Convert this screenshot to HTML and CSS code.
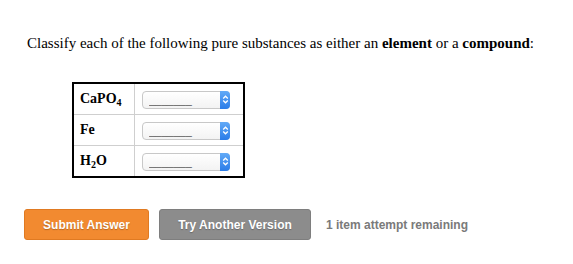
FILE: index.html
```html
<!DOCTYPE html>
<html lang="en">
<head>
    <meta charset="UTF-8">
    <title>Classify substances</title>
    <link rel="stylesheet" href="styles.css">
</head>
<body>
    <div class="question">
        <p class="prompt">Classify each of the following pure substances as either an <b>element</b> or a <b>compound</b>:</p>

        <table class="answers">
            <tr>
                <th>CaPO<sub>4</sub></th>
                <td>
                    <span class="picker">
                        <select><option>_______</option><option>element</option><option>compound</option></select>
                        <span class="arrow"><svg width="7" height="11" viewBox="0 0 7 11"><path d="M1.2 4.5 L3.5 2.2 L5.8 4.5 M1.2 6.5 L3.5 8.8 L5.8 6.5" fill="none" stroke="#fff" stroke-width="1.3"/></svg></span>
                    </span>
                </td>
            </tr>
            <tr>
                <th>Fe</th>
                <td>
                    <span class="picker">
                        <select><option>_______</option><option>element</option><option>compound</option></select>
                        <span class="arrow"><svg width="7" height="11" viewBox="0 0 7 11"><path d="M1.2 4.5 L3.5 2.2 L5.8 4.5 M1.2 6.5 L3.5 8.8 L5.8 6.5" fill="none" stroke="#fff" stroke-width="1.3"/></svg></span>
                    </span>
                </td>
            </tr>
            <tr>
                <th>H<sub>2</sub>O</th>
                <td>
                    <span class="picker">
                        <select><option>_______</option><option>element</option><option>compound</option></select>
                        <span class="arrow"><svg width="7" height="11" viewBox="0 0 7 11"><path d="M1.2 4.5 L3.5 2.2 L5.8 4.5 M1.2 6.5 L3.5 8.8 L5.8 6.5" fill="none" stroke="#fff" stroke-width="1.3"/></svg></span>
                    </span>
                </td>
            </tr>
        </table>

        <div class="actions">
            <button class="btn btn-submit">Submit Answer</button>
            <button class="btn btn-retry">Try Another Version</button>
            <span class="attempts">1 item attempt remaining</span>
        </div>
    </div>
</body>
</html>
```

FILE: styles.css
```css
body {
    margin: 0;
    background: #fff;
    font-family: "Liberation Serif", "Times New Roman", serif;
    color: #000;
}
.question {
    padding: 34px 0 0 27px;
}
.prompt {
    margin: 0;
    font-size: 15px;
    line-height: 18px;
}
.answers {
    margin: 30px 0 0 45px;
    border: 2px solid #000;
    border-collapse: collapse;
}
.answers th,
.answers td {
    border: 1px solid #cfcfcf;
    height: 30px;
    padding: 0;
    vertical-align: middle;
}
.answers tr:first-child th,
.answers tr:first-child td {
    border-top: none;
}
.answers th {
    text-align: left;
    font-size: 14px;
    width: 54px;
    padding-left: 6px;
    border-left: none;
}
.answers th sub {
    font-size: 10px;
    vertical-align: -3px;
    line-height: 0;
}
.answers td {
    width: 101px;
    padding-left: 7px;
    border-right: none;
}
.picker {
    position: relative;
    display: inline-block;
    vertical-align: middle;
}
.picker select {
    appearance: none;
    -webkit-appearance: none;
    width: 88px;
    height: 18px;
    border: 1px solid #c8c8c8;
    border-radius: 4px;
    background: linear-gradient(#fff, #f3f3f3);
    font-family: "Liberation Sans", Arial, sans-serif;
    font-size: 11px;
    color: #555;
    padding: 0 0 0 6px;
    margin: 0;
    display: block;
}
.arrow {
    position: absolute;
    top: 0;
    right: 0;
    width: 10px;
    height: 18px;
    border-radius: 0 4px 4px 0;
    background: linear-gradient(#62aaf7, #2a7ce8);
    display: flex;
    align-items: center;
    justify-content: center;
    pointer-events: none;
}
.actions {
    display: flex;
    align-items: center;
    margin-top: 31px;
    margin-left: -3px;
}
.btn {
    height: 31px;
    padding: 0;
    border-radius: 3px;
    font-family: "Liberation Sans", Arial, sans-serif;
    font-weight: bold;
    font-size: 12px;
    color: #fff;
    text-shadow: 0 1px 1px rgba(0, 0, 0, 0.25);
    cursor: pointer;
}
.btn-submit {
    width: 125px;
    background: #f28a30;
    border: 1px solid #e07a22;
}
.btn-retry {
    width: 152px;
    margin-left: 10px;
    background: #8c8c8c;
    border: 1px solid #7e7e7e;
}
.attempts {
    margin-left: 15px;
    font-family: "Liberation Sans", Arial, sans-serif;
    font-weight: bold;
    font-size: 12px;
    color: #7a7a7a;
}
```
